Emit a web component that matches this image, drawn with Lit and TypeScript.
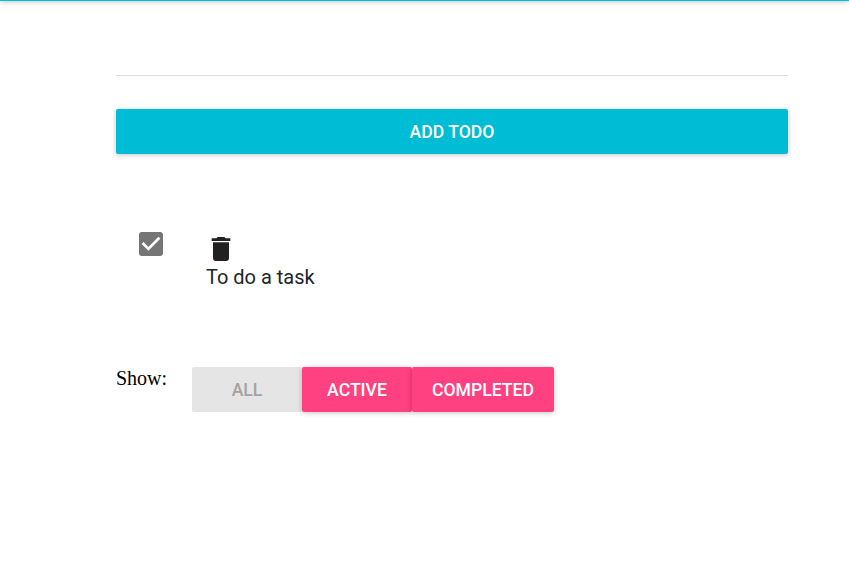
import { html, css, LitElement } from "lit";
import { customElement } from "lit/decorators.js";

@customElement("app-root")
class AppRoot extends LitElement {
  static styles = css`
    :host {
      display: block;
      height: 572px;
      background: #fff;
      overflow: hidden;
    }
    /* app bar sits almost fully above the page, only its last pixel shows */
    .topbar {
      height: 64px;
      margin-top: -63px;
      background: #00bcd4;
      box-shadow:
        0 1px 6px rgba(0, 0, 0, 0.12),
        0 1px 4px rgba(0, 0, 0, 0.12);
    }
    .content {
      width: 672px;
      margin-left: 116px;
    }
    .field {
      height: 75px;
      border-bottom: 1px solid #e0e0e0;
      box-sizing: content-box;
      margin-top: -1px;
    }
    button {
      border: 0;
      margin: 0;
      padding: 0;
      height: 45px;
      border-radius: 2px;
      font-family: Roboto, sans-serif;
      font-size: 17.6px;
      font-weight: 500;
      color: #fff;
      text-transform: uppercase;
      box-shadow:
        0 1px 6px rgba(0, 0, 0, 0.12),
        0 1px 4px rgba(0, 0, 0, 0.12);
    }
    .add {
      display: block;
      width: 100%;
      margin-top: 33px;
      background: #00bcd4;
    }
    .todo {
      display: flex;
      margin-top: 74px;
      height: 139px;
    }
    .check {
      width: 32px;
      height: 32px;
      margin-left: 19px;
      color: #757575;
    }
    .body {
      margin-left: 38px;
      margin-top: 5px;
    }
    svg {
      display: block;
      width: 32px;
      height: 32px;
      fill: currentColor;
    }
    .trash {
      color: #212121;
    }
    .label {
      font-family: Roboto, sans-serif;
      font-size: 20px;
      line-height: 23px;
      color: #212529;
      margin: 1px 0 0 1px;
    }
    .filters {
      display: flex;
      align-items: flex-start;
    }
    .show {
      width: 76px;
      font-family: "Liberation Serif", serif;
      font-size: 20px;
      line-height: 23px;
    }
    .filter {
      width: 110px;
      background: #ff4081;
    }
    .filter.completed {
      width: 142px;
    }
    .filter.all {
      background: #e5e5e5;
      color: #a3a3a3;
      box-shadow: none;
    }
  `;

  render() {
    return html`
      <div class="topbar"></div>
      <div class="content">
        <div class="field"></div>
        <button class="add">Add Todo</button>
        <div class="todo">
          <div class="check">
            <svg viewBox="0 0 24 24">
              <path
                d="M19 3H5c-1.11 0-2 .9-2 2v14c0 1.1.89 2 2 2h14c1.11 0 2-.9 2-2V5c0-1.1-.89-2-2-2zm-9 14l-5-5 1.41-1.41L10 14.17l7.59-7.59L19 8l-9 9z"
              ></path>
            </svg>
          </div>
          <div class="body">
            <div class="trash">
              <svg viewBox="0 0 24 24">
                <path
                  d="M6 19c0 1.1.9 2 2 2h8c1.1 0 2-.9 2-2V7H6v12zM19 4h-3.5l-1-1h-5l-1 1H5v2h14V4z"
                ></path>
              </svg>
            </div>
            <div class="label">To do a task</div>
          </div>
        </div>
        <div class="filters">
          <span class="show">Show:</span>
          <button class="filter all" disabled>All</button>
          <button class="filter">Active</button>
          <button class="filter completed">Completed</button>
        </div>
      </div>
    `;
  }
}

export default AppRoot;
